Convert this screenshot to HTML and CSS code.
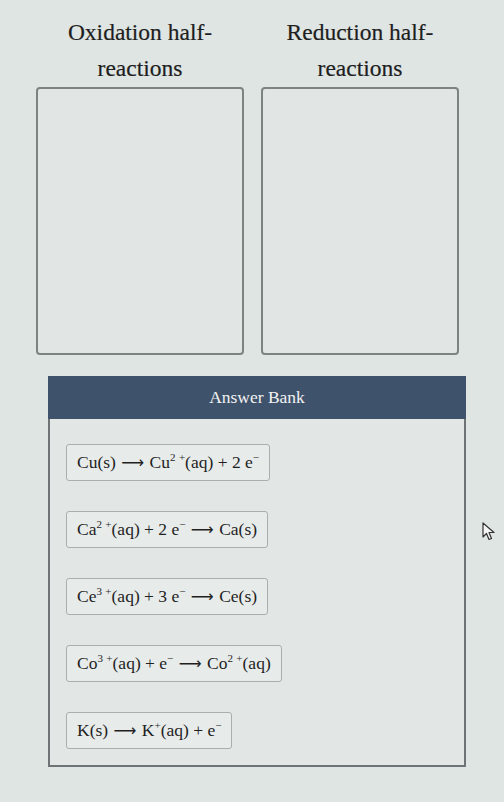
FILE: index.html
```html
<!DOCTYPE html>
<html lang="en">
<head>
    <meta charset="UTF-8">
    <meta name="viewport" content="width=device-width, initial-scale=1.0">
    <title>Half-reactions</title>
    <link rel="stylesheet" href="styles.css">
</head>
<body>
    <div class="columns">
        <div class="column column-ox">
            <h2 class="column-title">Oxidation half-<br>reactions</h2>
            <div class="drop-zone"></div>
        </div>
        <div class="column column-red">
            <h2 class="column-title">Reduction half-<br>reactions</h2>
            <div class="drop-zone"></div>
        </div>
    </div>

    <div class="answer-bank">
        <div class="bank-header">Answer Bank</div>
        <div class="bank-body">
            <div class="chip">Cu(s) <span class="arrow">⟶</span> Cu<sup>2</sup> <sup class="plus">+</sup>(aq) + 2 e<sup>−</sup></div>
            <div class="chip">Ca<sup>2</sup> <sup class="plus">+</sup>(aq) + 2 e<sup>−</sup> <span class="arrow">⟶</span> Ca(s)</div>
            <div class="chip">Ce<sup>3</sup> <sup class="plus">+</sup>(aq) + 3 e<sup>−</sup> <span class="arrow">⟶</span> Ce(s)</div>
            <div class="chip">Co<sup>3</sup> <sup class="plus">+</sup>(aq) + e<sup>−</sup> <span class="arrow">⟶</span> Co<sup>2</sup> <sup class="plus">+</sup>(aq)</div>
            <div class="chip">K(s) <span class="arrow">⟶</span> K<sup>+</sup>(aq) + e<sup>−</sup></div>
        </div>
    </div>

    <!-- mouse pointer -->
    <svg class="cursor" width="14" height="20" viewBox="0 0 14 20">
        <path d="M1 1 L1 15 L4.5 11.5 L7 17.5 L9.5 16.5 L7 10.5 L12 10.5 Z" fill="#f4f4f4" stroke="#333" stroke-width="1.2" stroke-linejoin="round"/>
    </svg>
</body>
</html>
```

FILE: styles.css
```css
body {
    margin: 0;
    padding: 14px 0 0;
    background: #dfe5e3;
    font-family: "Liberation Serif", "Times New Roman", serif;
    color: #1f1f1f;
    position: relative;
    min-height: 788px;
}

.columns {
    display: flex;
    gap: 17px;
    padding-left: 36px;
}

.column-ox { width: 208px; }
.column-red { width: 198px; }

.column-title {
    margin: 0;
    font-size: 23.5px;
    font-weight: normal;
    line-height: 36px;
    text-align: center;
    color: #1e1e1e;
    -webkit-text-stroke: 0.2px #1e1e1e;
}

.drop-zone {
    margin-top: 1px;
    height: 264px;
    border: 2px solid #7d8283;
    border-radius: 4px;
    background: #e1e6e4;
}

.answer-bank {
    margin: 21px 0 0 48px;
    width: 418px;
}

.bank-header {
    height: 43px;
    background: #3f526b;
    color: #f2f2f2;
    font-size: 17.5px;
    display: flex;
    align-items: center;
    justify-content: center;
}

.bank-body {
    border: 2px solid #6e7476;
    border-top: none;
    padding: 25px 0 16px 16px;
    display: flex;
    flex-direction: column;
    align-items: flex-start;
    gap: 30px;
    background: #e2e7e5;
}

.chip {
    height: 35px;
    line-height: 35px;
    padding: 0 10px;
    border: 1.5px solid #a9aeae;
    border-radius: 3px;
    background: #e7ebea;
    font-size: 17.5px;
    white-space: nowrap;
    color: #1f1f1f;
}

.chip sup {
    font-size: 11px;
    line-height: 0;
    position: relative;
    top: -7px;
    vertical-align: baseline;
}

.chip sup.plus {
    margin-left: -1px;
}

.arrow {
    font-family: "DejaVu Sans", sans-serif;
    font-size: 16px;
    margin: 0 1px;
}

.cursor {
    position: absolute;
    left: 482px;
    top: 522px;
}
```
